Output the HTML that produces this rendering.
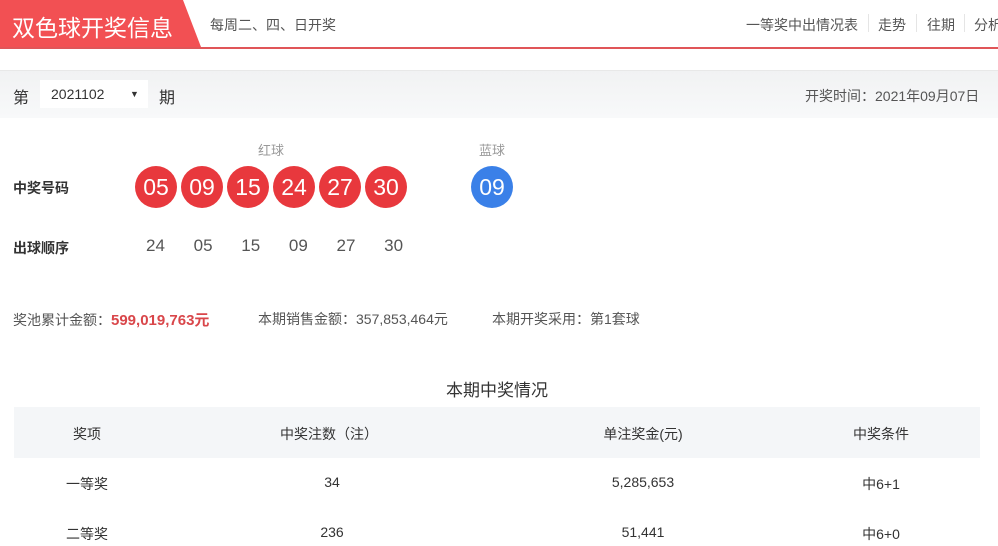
<!DOCTYPE html>
<html><head><meta charset="utf-8"><style>
*{margin:0;padding:0;box-sizing:border-box}
body{width:998px;height:546px;overflow:hidden;background:#fff;font-family:"Liberation Sans","Noto Sans CJK SC",sans-serif;color:#333;position:relative}
.a{position:absolute;white-space:nowrap}
.ball{position:absolute;width:42px;height:42px;border-radius:50%;background:#e8383d;color:#fff;font-size:23px;line-height:42px;text-align:center;top:166px}
.c{transform:translateX(-50%)}
.sep{position:absolute;top:14px;width:1px;height:18px;background:#e5e5e5}
</style></head><body>
<svg class="a" style="left:0;top:0" width="998" height="50"><polygon points="0,0 183,0 201,47 0,47" fill="#f25053"/><rect x="0" y="47" width="998" height="2" fill="#e05558"/></svg>
<div class="a" style="left:12px;top:9px;font-size:23px;color:#fff">双色球开奖信息</div>
<div class="a" style="left:210px;top:15px;font-size:14px;color:#555">每周二、四、日开奖</div>
<div class="a" style="left:746px;top:15px;font-size:14px;color:#555">一等奖中出情况表</div>
<div class="sep" style="left:868px"></div>
<div class="a" style="left:878px;top:15px;font-size:14px;color:#555">走势</div>
<div class="sep" style="left:916px"></div>
<div class="a" style="left:927px;top:15px;font-size:14px;color:#555">往期</div>
<div class="sep" style="left:964px"></div>
<div class="a" style="left:974px;top:15px;font-size:14px;color:#555">分析</div>
<div class="a" style="left:0;top:70px;width:998px;height:48px;background:linear-gradient(#f1f2f3,#f8f9fa);border-top:1px solid #e8e8e8"></div>
<div class="a" style="left:13px;top:84px;font-size:16px">第</div>
<div class="a" style="left:40px;top:80px;width:108px;height:28px;background:#fff;font-size:14px;line-height:28px;padding-left:11px">2021102<span style="position:absolute;left:90px;top:0;font-size:9px">▼</span></div>
<div class="a" style="left:159px;top:84px;font-size:16px">期</div>
<div class="a" style="left:805px;top:86px;font-size:14px;color:#555">开奖时间：2021年09月07日</div>
<div class="a" style="left:258px;top:140px;font-size:13px;color:#999">红球</div>
<div class="a" style="left:479px;top:140px;font-size:13px;color:#999">蓝球</div>
<div class="a" style="left:13px;top:178px;font-size:14px;font-weight:bold">中奖号码</div>
<div class="ball" style="left:135px">05</div><div class="ball" style="left:181px">09</div><div class="ball" style="left:227px">15</div><div class="ball" style="left:273px">24</div><div class="ball" style="left:319px">27</div><div class="ball" style="left:365px">30</div>
<div class="ball" style="left:471px;background:#3a80e8">09</div>
<div class="a" style="left:13px;top:238px;font-size:14px;font-weight:bold">出球顺序</div>
<div class="a" style="left:146px;top:236px;font-size:17px;color:#555;word-spacing:24px">24 05 15 09 27 30</div>
<div class="a" style="left:13px;top:309px;font-size:14px;color:#555">奖池累计金额：<b style="color:#d9464a;font-size:15px">599,019,763元</b></div>
<div class="a" style="left:258px;top:309px;font-size:14px;color:#555">本期销售金额：357,853,464元</div>
<div class="a" style="left:492px;top:309px;font-size:14px;color:#555">本期开奖采用：第1套球</div>
<div class="a c" style="left:497px;top:376px;font-size:17px">本期中奖情况</div>
<div class="a" style="left:14px;top:407px;width:966px;height:51px;background:#f4f6f8"></div>
<div class="a c" style="left:87px;top:424px;font-size:14px">奖项</div>
<div class="a c" style="left:329px;top:424px;font-size:14px">中奖注数（注）</div>
<div class="a c" style="left:643px;top:424px;font-size:14px">单注奖金(元)</div>
<div class="a c" style="left:881px;top:424px;font-size:14px">中奖条件</div>
<div class="a c" style="left:87px;top:474px;font-size:14px">一等奖</div>
<div class="a c" style="left:332px;top:474px;font-size:14px">34</div>
<div class="a c" style="left:643px;top:474px;font-size:14px">5,285,653</div>
<div class="a c" style="left:881px;top:474px;font-size:14px">中6+1</div>
<div class="a c" style="left:87px;top:524px;font-size:14px">二等奖</div>
<div class="a c" style="left:332px;top:524px;font-size:14px">236</div>
<div class="a c" style="left:643px;top:524px;font-size:14px">51,441</div>
<div class="a c" style="left:881px;top:524px;font-size:14px">中6+0</div>
</body></html>
